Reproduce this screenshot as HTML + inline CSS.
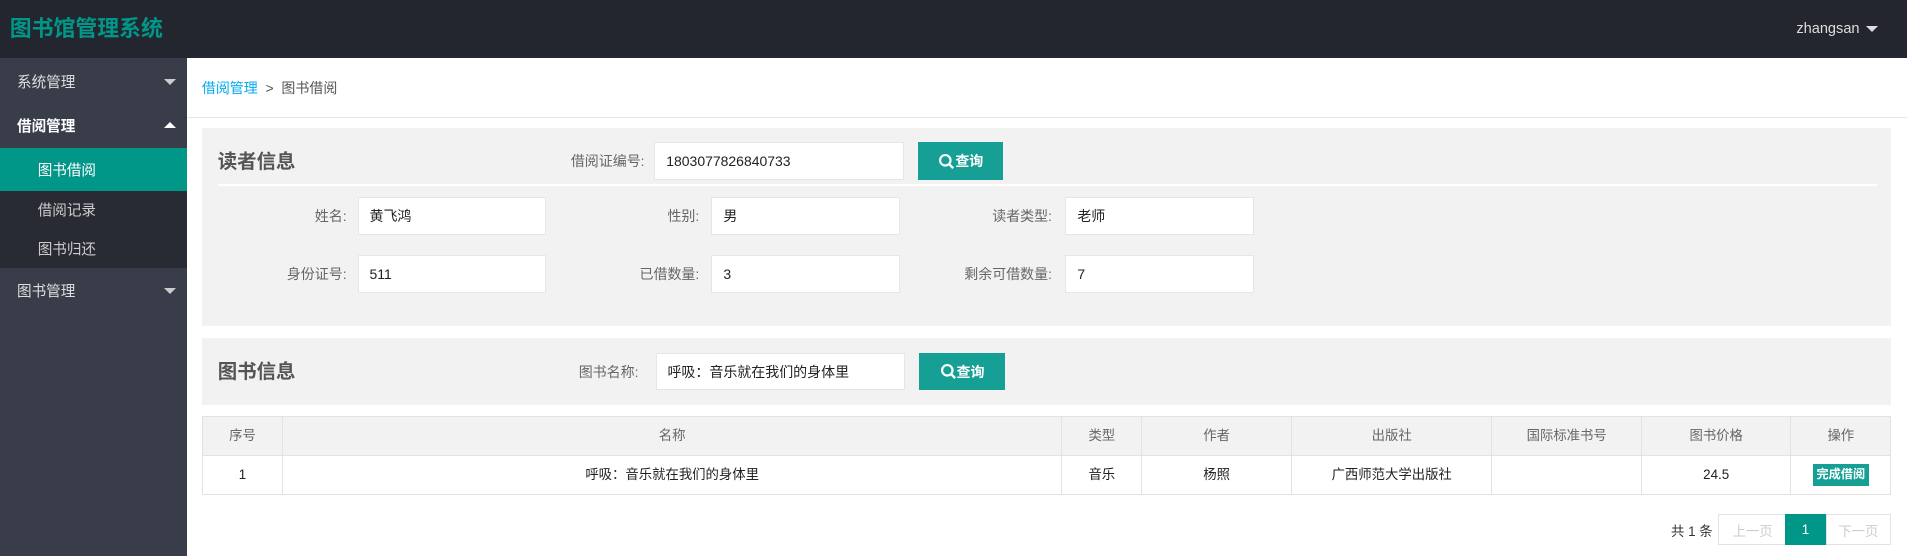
<!DOCTYPE html>
<html><head><meta charset="utf-8"><style>
*{margin:0;padding:0;box-sizing:border-box}
html,body{width:1907px;height:556px;overflow:hidden;background:#fff}
body{font-family:"Liberation Sans","Noto Sans CJK SC",sans-serif;font-size:12px;color:#333}
#w{zoom:1.21620;width:1568px;height:457px;position:relative}
.a{position:absolute}
.f{display:flex;align-items:center}
.hd{left:0;top:0;width:1568px;height:48px;background:#23262e}
.logo{left:8px;top:0;height:46px;color:#009688;font-size:18px;font-weight:bold}
.user{left:1477px;top:0;height:48px;color:#ddd;font-size:12px}
.car{display:inline-block;width:0;height:0;border-left:5px solid transparent;border-right:5px solid transparent;border-top:5px solid #ddd;margin-left:5px}
.sb{left:0;top:48px;width:154px;height:409px;background:#393d49}
.mi{left:0;width:154px;color:#ddd;padding-left:14px;height:36px}
.mi .t{position:absolute;right:9px;top:16px;border-left:5px solid transparent;border-right:5px solid transparent;border-top:5px solid #ccc}
.mi .u{position:absolute;right:9px;top:15px;border-left:5px solid transparent;border-right:5px solid transparent;border-bottom:5px solid #fff}
.sub{left:0;top:122px;width:154px;height:98px;background:#282b33}
.si{left:0;width:154px;padding-left:31px;color:#ccc}
.pan{background:#f2f2f2}
.h{font-size:16px;font-weight:bold;color:#555}
.lb{color:#666;justify-content:flex-end;width:120px;height:31px;font-size:11.5px}
.in{background:#fff;border:1px solid #e6e6e6;height:31px;padding-left:9px;color:#222;font-size:11.5px}
.btn{background:#16a095;color:#fff;height:31px;justify-content:center;width:70px;font-size:11.5px;font-weight:bold}
table{border-collapse:collapse;position:absolute;left:166px;top:342px;width:1389px}
td,th{border:1px solid #e2e2e2;text-align:center;height:32px;font-size:11px;color:#222;line-height:14px;vertical-align:middle}
th{background:#f2f2f2;color:#666;font-weight:normal}
.pg{top:423px;height:25px;border:1px solid #e2e2e2;justify-content:center;color:#ccc;font-size:11px}
</style></head><body><div id="w">
<div class="a hd"></div>
<div class="a logo f">图书馆管理系统</div>
<div class="a user f">zhangsan<span class="car"></span></div>
<div class="a sb"></div>
<div class="a mi f" style="top:49px">系统管理<span class="t"></span></div>
<div class="a mi f" style="top:85px;color:#fff;font-weight:bold">借阅管理<span class="u"></span></div>
<div class="a sub"></div>
<div class="a si f" style="top:122px;height:35px;background:#009688;color:#fff">图书借阅</div>
<div class="a si f" style="top:157px;height:31px">借阅记录</div>
<div class="a si f" style="top:188px;height:32px">图书归还</div>
<div class="a mi f" style="top:221px">图书管理<span class="t"></span></div>

<div class="a f" style="left:166px;top:62px;height:20px;color:#555;font-size:11.5px"><span style="color:#01AAED">借阅管理</span>&nbsp;&nbsp;&gt;&nbsp;&nbsp;图书借阅</div>
<div class="a" style="left:154px;top:96px;width:1414px;height:1px;background:#e6e6e6"></div>

<div class="a pan" style="left:166px;top:105px;width:1389px;height:163px"></div>
<div class="a h f" style="left:179px;top:117px;height:28px">读者信息</div>
<div class="a lb f" style="left:410px;top:117px">借阅证编号:</div>
<div class="a in f" style="left:538px;top:117px;width:205px">1803077826840733</div>
<div class="a btn f" style="left:755px;top:117px"><svg width="14" height="14" viewBox="0 0 14 14"><circle cx="6" cy="6" r="4.3" fill="none" stroke="#fff" stroke-width="1.8"/><path d="M9 9l3.5 3.5" stroke="#fff" stroke-width="2"/></svg>查询</div>
<div class="a" style="left:179px;top:151px;width:1364px;height:2px;background:#fff"></div>

<div class="a lb f" style="left:165px;top:162px">姓名:</div>
<div class="a in f" style="left:294px;top:162px;width:155px">黄飞鸿</div>
<div class="a lb f" style="left:455px;top:162px">性别:</div>
<div class="a in f" style="left:585px;top:162px;width:155px">男</div>
<div class="a lb f" style="left:745px;top:162px">读者类型:</div>
<div class="a in f" style="left:876px;top:162px;width:155px">老师</div>
<div class="a lb f" style="left:165px;top:210px">身份证号:</div>
<div class="a in f" style="left:294px;top:210px;width:155px">511</div>
<div class="a lb f" style="left:455px;top:210px">已借数量:</div>
<div class="a in f" style="left:585px;top:210px;width:155px">3</div>
<div class="a lb f" style="left:745px;top:210px">剩余可借数量:</div>
<div class="a in f" style="left:876px;top:210px;width:155px">7</div>

<div class="a pan" style="left:166px;top:278px;width:1389px;height:55px"></div>
<div class="a h f" style="left:179px;top:290px;height:28px">图书信息</div>
<div class="a lb f" style="left:405px;top:290px">图书名称:</div>
<div class="a in f" style="left:539px;top:290px;width:205px">呼吸：音乐就在我们的身体里</div>
<div class="a btn f" style="left:756px;top:290px"><svg width="14" height="14" viewBox="0 0 14 14"><circle cx="6" cy="6" r="4.3" fill="none" stroke="#fff" stroke-width="1.8"/><path d="M9 9l3.5 3.5" stroke="#fff" stroke-width="2"/></svg>查询</div>

<table>
<colgroup><col style="width:66px"><col style="width:641px"><col style="width:66px"><col style="width:123px"><col style="width:165px"><col style="width:123px"><col style="width:123px"><col style="width:82px"></colgroup>
<tr><th>序号</th><th>名称</th><th>类型</th><th>作者</th><th>出版社</th><th>国际标准书号</th><th>图书价格</th><th>操作</th></tr>
<tr><td>1</td><td>呼吸：音乐就在我们的身体里</td><td>音乐</td><td>杨照</td><td>广西师范大学出版社</td><td></td><td>24.5</td><td><span style="display:inline-block;background:#16a095;color:#fff;padding:2px 3px;font-size:10px;font-weight:bold;line-height:14px">完成借阅</span></td></tr>
</table>

<div class="a f" style="left:1374px;top:423px;height:25px;font-size:11px;color:#333">共 1 条</div>
<div class="a pg f" style="left:1413px;width:56px">上一页</div>
<div class="a pg f" style="left:1468px;width:33px;background:#009688;border-color:#009688;color:#fff">1</div>
<div class="a pg f" style="left:1501px;width:54px">下一页</div>
</div></body></html>
